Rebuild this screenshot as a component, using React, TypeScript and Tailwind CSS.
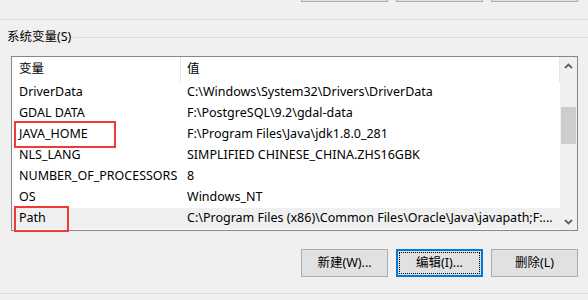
import type { ReactNode } from 'react'

const rows = [
  { name: 'DriverData', value: 'C:\\Windows\\System32\\Drivers\\DriverData' },
  { name: 'GDAL DATA', value: 'F:\\PostgreSQL\\9.2\\gdal-data' },
  { name: 'JAVA_HOME', value: 'F:\\Program Files\\Java\\jdk1.8.0_281' },
  { name: 'NLS_LANG', value: 'SIMPLIFIED CHINESE_CHINA.ZHS16GBK' },
  { name: 'NUMBER_OF_PROCESSORS', value: '8' },
  { name: 'OS', value: 'Windows_NT' },
  { name: 'Path', value: 'C:\\Program Files (x86)\\Common Files\\Oracle\\Java\\javapath;F:...', selected: true },
]

function Btn({ children, focused }: { children?: ReactNode; focused?: boolean }) {
  return (
    <div
      className={
        'relative flex h-[28px] w-[87px] items-center justify-center bg-[#e1e1e1] ' +
        (focused ? 'border-2 border-[#0078d7]' : 'border border-[#adadad]')
      }
    >
      {focused && <div className="absolute inset-[1px] border border-dotted border-black" />}
      <span className="relative">{children}</span>
    </div>
  )
}

function Chevron({ down }: { down?: boolean }) {
  return (
    <svg width="9" height="6" viewBox="0 0 9 6" className={down ? 'rotate-180' : ''}>
      <path d="M1 5 L4.5 1.5 L8 5" fill="none" stroke="#606060" strokeWidth="1.8" />
    </svg>
  )
}

export default function App() {
  return (
    <div
      className="flex h-[300px] w-[588px] flex-col overflow-hidden bg-[#f0f0f0] text-[12.5px] text-black"
      style={{ fontFamily: '"Noto Sans", "Noto Sans CJK SC", sans-serif' }}
    >
      {/* bottoms of the buttons from the section above */}
      <div className="h-[19px] shrink-0">
        <div className="-mt-[26px] flex justify-end gap-[8px] pr-[10px]">
          <Btn />
          <Btn />
          <Btn />
        </div>
      </div>
      <div className="h-px shrink-0 bg-[#dadada]" />

      <div className="mt-[9px] flex h-[17px] shrink-0 items-center">
        <span className="pl-[7px] pr-[2px] leading-none">系统变量(S)</span>
        <div className="h-px flex-1 bg-[#dcdcdc]" />
      </div>

      <div className="relative ml-[11px] mr-[10px] mt-[10px] flex h-[175px] shrink-0 border border-[#828790] bg-white">
        <div className="flex-1">
          <div className="flex h-[25px] items-center">
            <div className="flex h-full w-[169px] items-center border-r border-[#e5e5e5] pl-[7px]">变量</div>
            <div className="flex h-full flex-1 items-center border-r border-[#e5e5e5] pl-[6px]">值</div>
          </div>
          {rows.map((r) => (
            <div key={r.name} className={'flex h-[21px] items-center ' + (r.selected ? 'bg-[#f0f0f0]' : '')}>
              <div className="w-[169px] whitespace-nowrap pl-[7px]">{r.name}</div>
              <div className="flex-1 whitespace-nowrap pl-[6px]">{r.value}</div>
            </div>
          ))}
        </div>
        <div className="flex w-[17px] flex-col bg-[#f0f0f0]">
          <div className="flex h-[17px] items-center justify-center">
            <Chevron />
          </div>
          <div className="flex-1 px-px pt-[33px]">
            <div className="h-[37px] bg-[#cdcdcd]" />
          </div>
          <div className="flex h-[17px] items-center justify-center">
            <Chevron down />
          </div>
        </div>

        {/* red annotation boxes */}
        <div className="absolute left-[2px] top-[64px] h-[27px] w-[102px] border-2 border-[#f03a3a]" />
        <div className="absolute left-[2px] top-[149px] h-[26px] w-[55px] border-2 border-[#f03a3a]" />
      </div>

      <div className="mt-[18px] flex shrink-0 justify-end gap-[8px] pr-[10px]">
        <Btn>新建(W)...</Btn>
        <Btn focused>编辑(I)...</Btn>
        <Btn>删除(L)</Btn>
      </div>
      <div className="mt-[16px] h-px shrink-0 bg-[#dadada]" />
    </div>
  )
}
